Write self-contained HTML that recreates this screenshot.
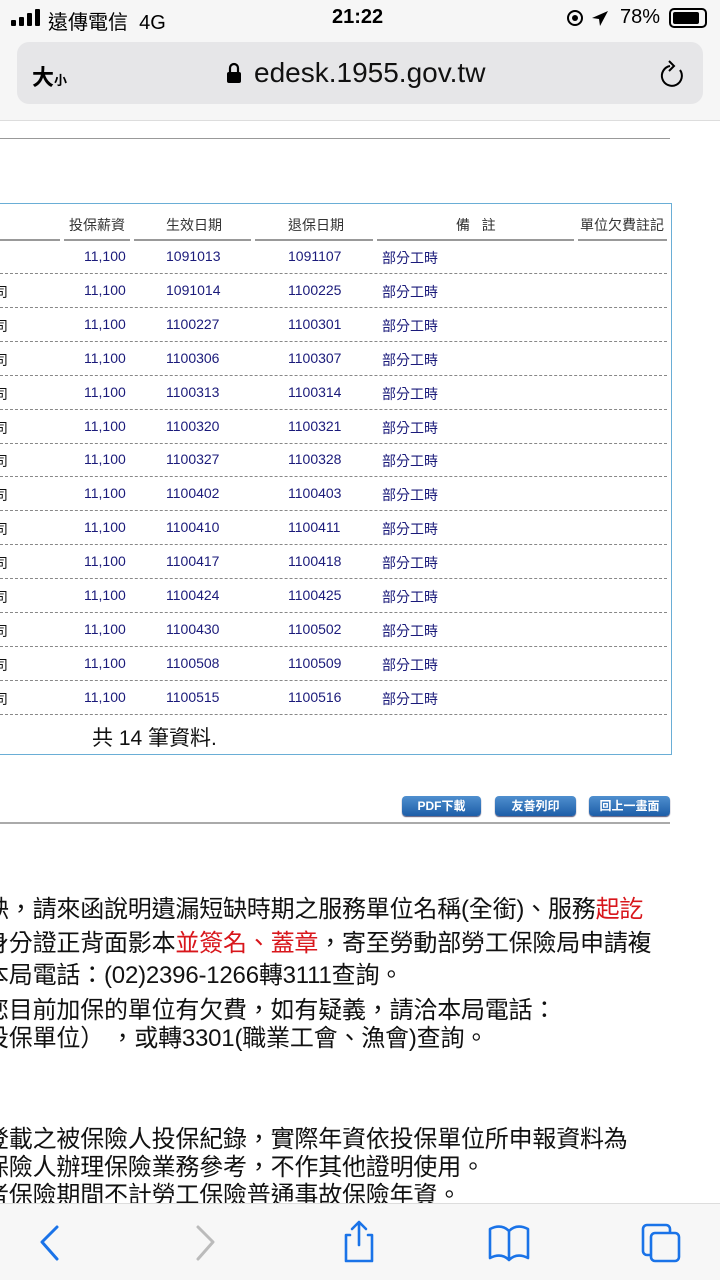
<!DOCTYPE html>
<html><head><meta charset="utf-8"><style>
*{margin:0;padding:0;box-sizing:border-box}
body{width:720px;height:1280px;overflow:hidden;background:#fff;font-family:"Liberation Sans","Noto Sans CJK TC",sans-serif;position:relative}
.a{position:absolute;white-space:nowrap}
.sb{font-size:20px;color:#000}
.cell{position:absolute;font-size:14px;color:#1a1a7a;white-space:nowrap}
.hd{position:absolute;font-size:14px;color:#333;white-space:nowrap}
.dash{position:absolute;left:0;width:667px;border-top:1px dashed #888}
.btn{position:absolute;top:796px;height:20px;border-radius:4px;background:linear-gradient(#4f8fcf,#1d5ea8);color:#fff;font-size:12px;font-weight:bold;text-align:center;line-height:20px;box-shadow:0 1px 1px #557}
.t{position:absolute;left:-15px;font-size:24px;line-height:28px;color:#111;white-space:nowrap;letter-spacing:-0.2px}
.r{color:#d8161b}
</style></head><body>
<div class="a" style="left:0;top:0;width:720px;height:120px;background:#f6f6f6"></div>
<!-- status bar -->
<svg class="a" style="left:11px;top:9px" width="32" height="18"><rect x="0" y="11" width="5" height="6" rx="1"/><rect x="8" y="8" width="5" height="9" rx="1"/><rect x="16" y="4" width="5" height="13" rx="1"/><rect x="24" y="0" width="5" height="17" rx="1"/></svg>
<div class="a sb" style="left:48px;top:6px">遠傳電信&nbsp;&nbsp;4G</div>
<div class="a sb" style="left:332px;top:6px;font-weight:bold">21:22</div>
<svg class="a" style="left:566px;top:9px" width="50" height="20"><circle cx="9" cy="9" r="7" stroke="#000" stroke-width="2" fill="none"/><circle cx="9" cy="9" r="3"/><path d="M42 2L26 9l7 1 1 7z" fill="#000"/></svg>
<div class="a sb" style="left:620px;top:6px">78%</div>
<div class="a" style="left:669px;top:8px;width:38px;height:20px;border:2px solid #000;border-radius:5px;padding:2px"><div style="width:26px;height:12px;background:#000;border-radius:2px"></div></div>
<!-- address -->
<div class="a" style="left:17px;top:42px;width:686px;height:62px;border-radius:12px;background:#e6e6e8"></div>
<div class="a" style="left:32px;top:60px;font-size:22px;font-weight:bold">大<span style="font-size:13px">小</span></div>
<svg class="a" style="left:226px;top:62px" width="16" height="22"><path d="M4 10V6a4 4 0 0 1 8 0v4" stroke="#000" stroke-width="2.2" fill="none"/><rect x="1" y="10" width="14" height="11" rx="2"/></svg>
<div class="a" style="left:254px;top:57px;font-size:28px;color:#111">edesk.1955.gov.tw</div>
<svg class="a" style="left:658px;top:58px" width="30" height="34"><path d="M22 12A10 10 0 1 1 12 8" stroke="#000" stroke-width="2" fill="none"/><path d="M11 3l5 5-5 5" stroke="#000" stroke-width="2" fill="none"/></svg>
<div class="a" style="left:0;top:120px;width:720px;height:1px;background:#ddd"></div>
<div class="a" style="left:0;top:138px;width:670px;height:1px;background:#999"></div>
<!-- table -->
<div class="a" style="left:-2px;top:203px;width:674px;height:552px;border:1px solid #6aaed6"></div>
<div class="hd" style="left:69px;top:215px">投保薪資</div>
<div class="hd" style="left:166px;top:215px">生效日期</div>
<div class="hd" style="left:288px;top:215px">退保日期</div>
<div class="hd" style="left:456px;top:215px">備&nbsp;&nbsp;&nbsp;註</div>
<div class="hd" style="left:580px;top:215px">單位欠費註記</div>
<div class="a" style="left:0;top:239px;width:60px;border-top:2px solid #999"></div>
<div class="a" style="left:64px;top:239px;width:66px;border-top:2px solid #999"></div>
<div class="a" style="left:134px;top:239px;width:117px;border-top:2px solid #999"></div>
<div class="a" style="left:255px;top:239px;width:118px;border-top:2px solid #999"></div>
<div class="a" style="left:377px;top:239px;width:197px;border-top:2px solid #999"></div>
<div class="a" style="left:578px;top:239px;width:89px;border-top:2px solid #999"></div>
<div id="rows"></div>
<div class="a" style="left:92px;top:722px;font-size:21px;color:#111">共 14 筆資料.</div>
<!-- buttons -->
<div class="btn" style="left:402px;width:79px">PDF下載</div>
<div class="btn" style="left:495px;width:81px">友善列印</div>
<div class="btn" style="left:589px;width:81px">回上一畫面</div>
<div class="a" style="left:0;top:822px;width:670px;height:2px;background:#aaa"></div>
<!-- text -->
<div class="t" style="top:896px">缺，請來函說明遺漏短缺時期之服務單位名稱(全銜)、服務<span class="r">起訖</span></div>
<div class="t" style="top:930px">身分證正背面影本<span class="r">並簽名、蓋章</span>，寄至勞動部勞工保險局申請複</div>
<div class="t" style="top:962px">本局電話：(02)2396-1266轉3111查詢。</div>
<div class="t" style="top:997px">您目前加保的單位有欠費，如有疑義，請洽本局電話：</div>
<div class="t" style="top:1025px">投保單位）&nbsp;，或轉3301(職業工會、漁會)查詢。</div>
<div class="t" style="top:1126px">登載之被保險人投保紀錄，實際年資依投保單位所申報資料為</div>
<div class="t" style="top:1154px">保險人辦理保險業務參考，不作其他證明使用。</div>
<div class="t" style="top:1182px">者保險期間不計勞工保險普通事故保險年資。</div>
<!-- toolbar -->
<div class="a" style="left:0;top:1203px;width:720px;height:77px;background:#f7f7f7;border-top:1px solid #ddd"></div>
<svg class="a" style="left:0;top:1203px" width="720" height="77" fill="none" stroke-width="3" stroke-linecap="round" stroke-linejoin="round">
<path d="M57 24L42 39L57 56" stroke="#1a73e8"/>
<path d="M198 24L213 39L198 56" stroke="#bbb"/>
<g stroke="#1a73e8" stroke-width="2.6"><path d="M350 32h-4v26h26V32h-4"/><path d="M359 42V19M352 26l7-7 7 7"/>
<path d="M490 26c8-4 14-3 19 2v29c-5-5-11-6-19-2zM528 26c-8-4-14-3-19 2v29c5-5 11-6 19-2z"/>
<rect x="643" y="22" width="27" height="30" rx="4"/><rect x="651" y="30" width="28" height="28" rx="4" fill="#f7f7f7"/></g>
</svg>
<script>
var d=[["","1091013","1091107"],["司","1091014","1100225"],["司","1100227","1100301"],["司","1100306","1100307"],["司","1100313","1100314"],["司","1100320","1100321"],["司","1100327","1100328"],["司","1100402","1100403"],["司","1100410","1100411"],["司","1100417","1100418"],["司","1100424","1100425"],["司","1100430","1100502"],["司","1100508","1100509"],["司","1100515","1100516"]];
var h="";
for(var i=0;i<14;i++){var y=248+i*33.9;
h+='<div class="cell" style="left:-6px;top:'+y+'px;color:#111">'+d[i][0]+'</div>';
h+='<div class="cell" style="left:84px;top:'+y+'px">11,100</div>';
h+='<div class="cell" style="left:166px;top:'+y+'px">'+d[i][1]+'</div>';
h+='<div class="cell" style="left:288px;top:'+y+'px">'+d[i][2]+'</div>';
h+='<div class="cell" style="left:382px;top:'+y+'px">部分工時</div>';
h+='<div class="dash" style="top:'+(y+25)+'px"></div>';}
document.getElementById("rows").innerHTML=h;
</script>
</body></html>
